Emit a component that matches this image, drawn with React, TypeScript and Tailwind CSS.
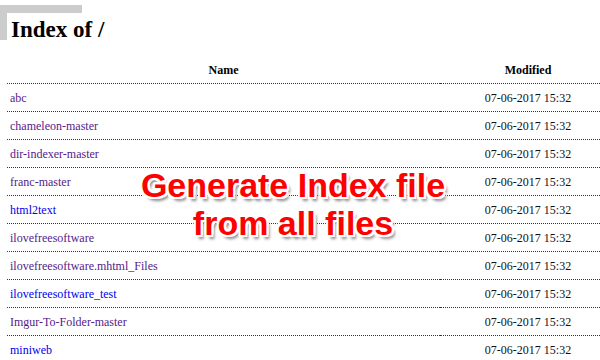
const rows = [
  { name: 'abc', visited: true },
  { name: 'chameleon-master', visited: true },
  { name: 'dir-indexer-master', visited: true },
  { name: 'franc-master', visited: true },
  { name: 'html2text', visited: false },
  { name: 'ilovefreesoftware', visited: true },
  { name: 'ilovefreesoftware.mhtml_Files', visited: true },
  { name: 'ilovefreesoftware_test', visited: false },
  { name: 'Imgur-To-Folder-master', visited: true },
  { name: 'miniweb', visited: false },
]

export default function App() {
  return (
    <div className="relative w-[600px] h-[360px] overflow-hidden bg-white font-[family-name:Liberation_Serif,Times_New_Roman,serif] text-black">
      {/* Heading with the grey corner bracket */}
      <div className="pt-[5px]">
        <div className="w-[82px] h-[35px] border-t-8 border-l-[7px] border-[#cccccc]">
          <h1 className="pt-[5px] pl-1 text-[23px] leading-[23px] font-bold whitespace-nowrap">Index of /</h1>
        </div>
      </div>

      {/* Listing */}
      <div className="mt-4 ml-[7px] w-[609px] text-[12px]">
        <div className="flex h-7 font-bold">
          <div className="w-[433px] flex items-center justify-center border-b border-dotted border-[#333]">Name</div>
          <div className="flex-1 flex items-center justify-center border-b border-dotted border-[#333]">Modified</div>
        </div>
        {rows.map((r) => (
          <div key={r.name} className="flex h-7">
            <div className="w-[433px] flex items-center pl-[3px] border-b border-dotted border-[#333]">
              <a href="#" className={r.visited ? 'text-[#551a8b]' : 'text-[#0000ee]'}>
                {r.name}
              </a>
            </div>
            <div className="flex-1 flex items-center justify-center border-b border-dotted border-[#333] text-[#111]">
              07-06-2017 15:32
            </div>
          </div>
        ))}
      </div>

      {/* Caption over the listing */}
      <div className="absolute top-[166px] left-0 w-[586px] text-center font-[family-name:Liberation_Sans,Arial,sans-serif] font-bold text-[34px] leading-[38px] text-[#ff0000] [text-shadow:-2px_-2px_0_#fff,2px_-2px_0_#fff,-2px_2px_0_#fff,2px_2px_0_#fff,0_-2px_0_#fff,0_2px_0_#fff,-2px_0_0_#fff,2px_0_0_#fff,3px_4px_3px_#888]">
        <div>Generate Index file</div>
        <div>from all files</div>
      </div>
    </div>
  )
}
